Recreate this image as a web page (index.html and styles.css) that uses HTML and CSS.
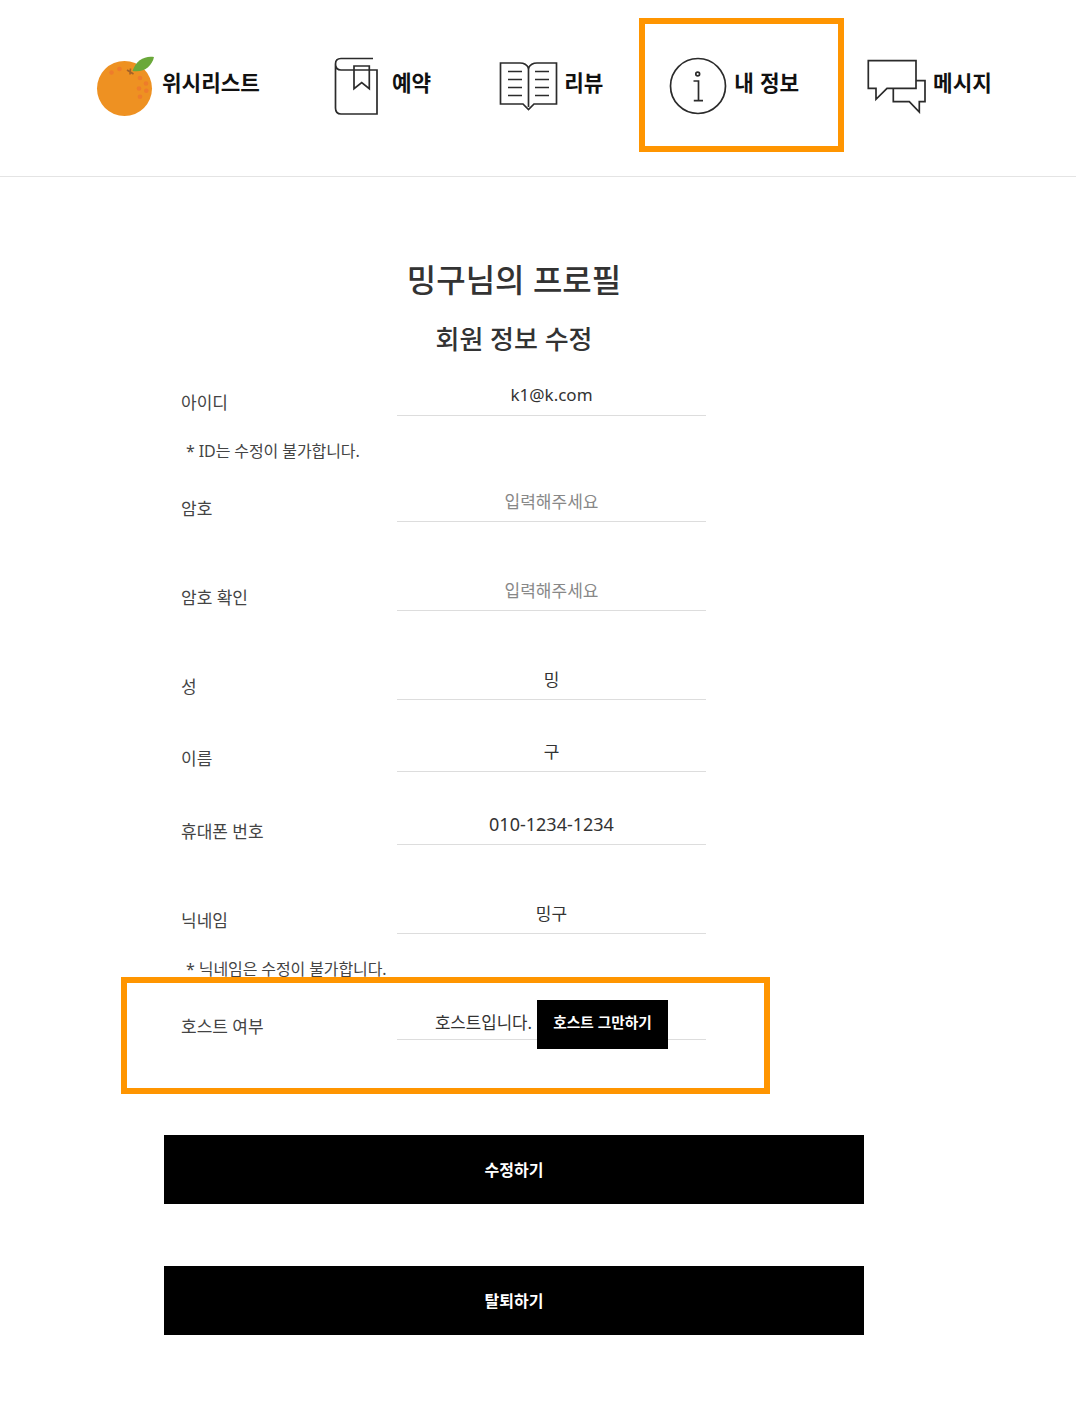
FILE: index.html
```html
<!DOCTYPE html>
<html lang="ko">
<head>
	<meta charset="utf-8">
	<title>회원 정보 수정</title>
	<link rel="stylesheet" href="styles.css">
</head>
<body>
	<nav class="topnav">
		<a class="nav-item nav-wish">
			<svg class="icon icon-orange" viewBox="96 56 60 61">
				<circle cx="124.5" cy="88.5" r="27.5" fill="#ee9122"/>
				<path d="M132.5 71 C136 60 145 55.5 154 57 C152 66 144 73 132.5 71 Z" fill="#6aa83a"/>
				<path d="M127 70 L133.5 74 M130.5 68.5 L130 74.5" stroke="#a2622a" stroke-width="1.6" fill="none"/>
				<g fill="#ee7c2b">
					<circle cx="111.5" cy="72.5" r="2.3"/>
					<circle cx="119.5" cy="69" r="2.3"/>
					<circle cx="140" cy="78" r="2.3"/>
					<circle cx="146" cy="83.5" r="2.3"/>
					<circle cx="139" cy="88.5" r="2.3"/>
					<circle cx="146.3" cy="90.7" r="2.3"/>
					<circle cx="140" cy="96.7" r="2.3"/>
				</g>
			</svg>
			<span class="nav-label">위시리스트</span>
		</a>
		<a class="nav-item nav-booking">
			<svg class="icon icon-book" viewBox="334 57 45 59">
				<g class="line">
					<path d="M373 58.5 H341 Q335.5 58.5 335.5 64 V108 Q335.5 114 341 114 H377 V70 H341 Q335.5 70 335.5 64"/>
					<path d="M354 66 H369.3 V88.7 L361.7 82.7 L354 88.7 Z"/>
				</g>
			</svg>
			<span class="nav-label">예약</span>
		</a>
		<a class="nav-item nav-review">
			<svg class="icon icon-open" viewBox="498 61 59 52">
				<g class="line">
					<path d="M499.5 64 H519 Q525 64 527.5 69 Q530 64 536 64 H555.5 V105 H533 L527.5 110.5 L522 105 H499.5 Z"/>
					<path d="M527.5 69 V108"/>
					<path d="M507 72.5 H521 M507 80.5 H521 M507 88.5 H521 M507 96.5 H521 M534 72.5 H548 M534 80.5 H548 M534 88.5 H548 M534 96.5 H548"/>
				</g>
			</svg>
			<span class="nav-label">리뷰</span>
		</a>
		<a class="nav-item nav-info">
			<svg class="icon icon-info" viewBox="669 57 59 58">
				<g class="line">
					<circle cx="698" cy="86" r="27.5"/>
					<circle cx="697.7" cy="74" r="1.9"/>
					<path d="M693.5 81 H698.5 V100.7 M693.8 100.7 H703"/>
				</g>
			</svg>
			<span class="nav-label">내 정보</span>
			<span class="mark-nav"></span>
		</a>
		<a class="nav-item nav-message">
			<svg class="icon icon-talk" viewBox="866 59 60 55">
				<g class="line">
					<path d="M867.3 60.7 H915 V88.3 H886 L875 99.3 V88.3 H867.3 Z"/>
					<path d="M915 80.7 H924 V101.7 H918.3 V112 L908.3 101.7 H892.3 V88.3"/>
				</g>
			</svg>
			<span class="nav-label">메시지</span>
		</a>
	</nav>

	<div id="content">
		<h1 class="title">밍구님의 프로필</h1>
		<h2 class="subtitle">회원 정보 수정</h2>

		<div class="row">
			<span class="label">아이디</span>
			<span class="field">k1@k.com</span>
		</div>
		<p class="note">* ID는 수정이 불가합니다.</p>

		<div class="row after-note">
			<span class="label">암호</span>
			<span class="field hint">입력해주세요</span>
		</div>
		<div class="row wide">
			<span class="label">암호 확인</span>
			<span class="field hint">입력해주세요</span>
		</div>
		<div class="row wide">
			<span class="label">성</span>
			<span class="field">밍</span>
		</div>
		<div class="row tight">
			<span class="label">이름</span>
			<span class="field">구</span>
		</div>
		<div class="row tight2">
			<span class="label">휴대폰 번호</span>
			<span class="field num">010-1234-1234</span>
		</div>
		<div class="row wide">
			<span class="label">닉네임</span>
			<span class="field">밍구</span>
		</div>
		<p class="note">* 닉네임은 수정이 불가합니다.</p>

		<!-- 호스트 영역 -->
		<div class="host-box">
			<div class="row">
				<span class="label">호스트 여부</span>
				<span class="field"><span class="host-text">호스트입니다.</span><button class="host-btn">호스트 그만하기</button></span>
			</div>
		</div>

		<button class="big-btn save">수정하기</button>
		<button class="big-btn leave">탈퇴하기</button>
	</div>
</body>
</html>
```

FILE: styles.css
```css
body {
	margin: 0;
	background-color: white;
	color: #333;
	font-family: "Noto Sans", "Noto Sans CJK KR", sans-serif;
}

/* top menu */
.topnav {
	box-sizing: content-box;
	display: flex;
	align-items: center;
	height: 172px;
	padding: 0 0 4px 96px;
	border-bottom: 1px solid #e4e4e4;
}
.nav-item {
	position: relative;
	display: flex;
	align-items: center;
	color: #111;
}
.nav-label {
	font-family: "Noto Sans CJK KR", sans-serif;
	font-size: 21.3px;
	font-weight: 700;
	line-height: 30px;
	white-space: nowrap;
	margin-bottom: 8px;
}
.icon { display: block; flex: none; }
.icon-orange { width: 60px; height: 61px; margin-right: 6px; }
.icon-book { width: 45px; height: 59px; margin-right: 13px; }
.icon-open { width: 59px; height: 52px; margin-right: 6px; }
.icon-info { width: 59px; height: 58px; margin-right: 6px; }
.icon-talk { width: 60px; height: 55px; margin-right: 6px; }
.line { fill: none; stroke: #2b2b2b; stroke-width: 1.7; }
.nav-booking { margin-left: 74px; }
.nav-review { margin-left: 68px; }
.nav-info { margin-left: 66px; }
.nav-message { margin-left: 68px; }
.mark-nav {
	position: absolute;
	top: -39px;
	bottom: -37px;
	left: -30px;
	right: -45px;
	border: 6px solid #ff9500;
}

/* form */
#content {
	width: 700px;
	margin-left: 164px;
}
.title {
	margin: 81px 0 0;
	text-align: center;
	font-size: 32px;
	font-weight: 500;
	line-height: 44px;
}
.subtitle {
	margin: 19px 0 0;
	text-align: center;
	font-size: 26px;
	font-weight: 500;
	line-height: 36px;
}
.row {
	display: flex;
	align-items: flex-start;
	margin-top: 18px;
}
.after-note { margin-top: 18px; }
.wide { margin-top: 48px; }
.tight { margin-top: 31px; }
.tight2 { margin-top: 32px; }
.label {
	box-sizing: border-box;
	width: 233px;
	padding: 16px 0 0 17px;
	font-size: 17px;
	line-height: 24px;
	color: #444;
}
.field {
	box-sizing: border-box;
	display: flex;
	justify-content: center;
	align-items: center;
	width: 309px;
	height: 41px;
	padding-bottom: 2px;
	border-bottom: 1px solid #ddd;
	font-size: 17px;
	color: #333;
}
.num { font-size: 18px; padding-bottom: 0; }
.hint { color: #888; }
.note {
	margin: 23px 0 0 22px;
	font-size: 16px;
	line-height: 24px;
	letter-spacing: -0.1px;
	color: #444;
}
.host-box {
	position: relative;
	width: 649px;
	box-sizing: border-box;
	margin: -4px 0 0 -43px;
	padding: 16px 0 48px 37px;
	border: 6px solid #ff9500;
	background-color: white;
}
.host-box .row { margin-top: 0; }
.host-text { margin-top: 8px; font-size: 16.8px; }
.host-btn {
	height: 49px;
	width: 131px;
	margin: 7px 0 -5px 5px;
	border: 0;
	padding: 0 0 5px;
	background-color: black;
	color: white;
	font-family: inherit;
	font-size: 14.7px;
	font-weight: 700;
}
.big-btn {
	display: block;
	width: 700px;
	height: 69px;
	border: 0;
	padding: 0 0 2px;
	background-color: black;
	color: white;
	font-family: inherit;
	font-size: 16px;
	font-weight: 700;
}
.save { margin-top: 41px; }
.leave { margin-top: 62px; }
```
